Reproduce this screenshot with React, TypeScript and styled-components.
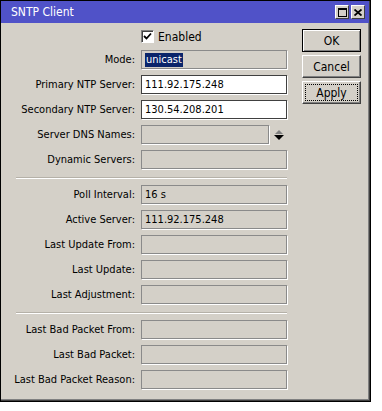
import { Fragment } from "react";
import styled, { createGlobalStyle } from "styled-components";

const GlobalStyle = createGlobalStyle`
  body {
    margin: 0;
    background: #fff;
    font-family: "DejaVu Sans Condensed", "DejaVu Sans", sans-serif;
    font-size: 11px;
  }
`;

const Window = styled.div`
  width: 371px;
  height: 402px;
  box-sizing: border-box;
  border: 1px solid #000;
  background: #d4d0c8;
  box-shadow: inset -1px -1px 0 #404040, inset -2px -2px 0 #808080;
  display: flex;
  flex-direction: column;
`;

const TitleBar = styled.div`
  height: 22px;
  flex: none;
  margin-right: 1px;
  background: #5052c8;
  color: #fff;
  display: flex;
  align-items: center;
  justify-content: space-between;
  padding: 0 4px 0 10px;
  font-size: 12px;
`;

const TitleButtons = styled.div`
  display: flex;
  gap: 2px;
`;

const TitleButton = styled.div`
  width: 14px;
  height: 14px;
  box-sizing: border-box;
  background: #d4d0c8;
  border: 1px solid;
  border-color: #fff #404040 #404040 #fff;
  display: flex;
  align-items: center;
  justify-content: center;
`;

const Body = styled.div`
  display: flex;
  gap: 15px;
  padding: 7px 7px 0 4px;
`;

const Form = styled.div`
  display: flex;
  flex-direction: column;
  width: 282px;
`;

const CheckRow = styled.label`
  display: flex;
  align-items: center;
  gap: 4px;
  height: 13px;
  padding-left: 136px;
  margin-bottom: 7px;
  font-size: 12px;
`;

const CheckBox = styled.span`
  width: 13px;
  height: 13px;
  box-sizing: border-box;
  background: #fff;
  border: 1px solid;
  border-color: #808080 #fff #fff #808080;
  box-shadow: inset 1px 1px 0 #404040;
  display: flex;
  align-items: center;
  justify-content: center;
`;

const Section = styled.div`
  display: grid;
  grid-template-columns: 130px 146px;
  column-gap: 6px;
  row-gap: 6px;
  align-items: center;
`;

const Label = styled.div`
  text-align: right;
  white-space: nowrap;
  color: #000;
`;

const Field = styled.div<{ $editable?: boolean; $width?: number }>`
  width: ${(p) => (p.$width ? `${p.$width}px` : "100%")};
  height: 19px;
  box-sizing: border-box;
  border: 1px solid ${(p) => (p.$editable ? "#404040" : "#8a8a8a")};
  box-shadow: 1px 1px 0 #fff;
  background: ${(p) => (p.$editable ? "#fff" : "#d4d0c8")};
  padding: 0 3px;
  display: flex;
  align-items: center;
  white-space: nowrap;
  overflow: hidden;
`;

const Selected = styled.span`
  background: #0a246a;
  color: #fff;
  padding: 0 1px;
  line-height: 14px;
`;

const FieldGroup = styled.div`
  display: flex;
  align-items: center;
  gap: 5px;
`;

const Separator = styled.div`
  margin: 8px 0 6px 11px;
  width: 271px;
  border-top: 1px solid #b5b1a8;
  border-bottom: 1px solid #fff;
`;

const Buttons = styled.div`
  display: flex;
  flex-direction: column;
  gap: 3px;
  margin-top: -1px;
`;

const Button = styled.button<{ $default?: boolean; $focused?: boolean }>`
  width: 59px;
  height: 23px;
  box-sizing: border-box;
  padding: 0;
  font: inherit;
  font-size: 12px;
  color: #000;
  background: #d4d0c8;
  border: 1px solid;
  border-color: ${(p) => (p.$default ? "#000" : "#fff #404040 #404040 #fff")};
  box-shadow: ${(p) =>
    p.$default
      ? "inset 1px 1px 0 #fff, inset -1px -1px 0 #808080"
      : "inset -1px -1px 0 #808080"};
  outline: ${(p) => (p.$focused ? "1px dotted #000" : "none")};
  outline-offset: -4px;
`;

type Row = { label: string; value?: string; editable?: boolean };

function Rows({ rows }: { rows: Row[] }) {
  return (
    <Section>
      {rows.map((r) => (
        <Fragment key={r.label}>
          <Label>{r.label}</Label>
          <Field $editable={r.editable}>{r.value}</Field>
        </Fragment>
      ))}
    </Section>
  );
}

export default function App() {
  return (
    <>
      <GlobalStyle />
      <Window>
        <TitleBar>
          <span>SNTP Client</span>
          <TitleButtons>
            <TitleButton>
              <svg width="9" height="9" viewBox="0 0 9 9">
                <rect x="0.5" y="0.5" width="8" height="8" fill="none" stroke="#000" />
                <rect x="0" y="0" width="9" height="2" fill="#000" />
              </svg>
            </TitleButton>
            <TitleButton>
              <svg width="8" height="7" viewBox="0 0 8 7">
                <path d="M0.5 0.5 L7.5 6.5 M7.5 0.5 L0.5 6.5" stroke="#000" strokeWidth="1.8" />
              </svg>
            </TitleButton>
          </TitleButtons>
        </TitleBar>
        <Body>
          <Form>
            <CheckRow>
              <CheckBox>
                <svg width="9" height="9" viewBox="0 0 9 9">
                  <path d="M1 4 L3.5 6.5 L8 1.5" fill="none" stroke="#000" strokeWidth="1.8" />
                </svg>
              </CheckBox>
              Enabled
            </CheckRow>
            <Section>
              <Label>Mode:</Label>
              <Field>
                <Selected>unicast</Selected>
              </Field>
              <Label>Primary NTP Server:</Label>
              <Field $editable>111.92.175.248</Field>
              <Label>Secondary NTP Server:</Label>
              <Field $editable>130.54.208.201</Field>
              <Label>Server DNS Names:</Label>
              <FieldGroup>
                <Field $width={128} />
                <svg width="10" height="10" viewBox="0 0 10 10">
                  <path d="M5 0 L9 4 L1 4 Z" fill="#808080" />
                  <path d="M0 5 L10 5 L5 10 Z" fill="#000" />
                </svg>
              </FieldGroup>
              <Label>Dynamic Servers:</Label>
              <Field />
            </Section>
            <Separator />
            <Rows
              rows={[
                { label: "Poll Interval:", value: "16 s" },
                { label: "Active Server:", value: "111.92.175.248" },
                { label: "Last Update From:" },
                { label: "Last Update:" },
                { label: "Last Adjustment:" },
              ]}
            />
            <Separator />
            <Rows
              rows={[
                { label: "Last Bad Packet From:" },
                { label: "Last Bad Packet:" },
                { label: "Last Bad Packet Reason:" },
              ]}
            />
          </Form>
          <Buttons>
            <Button $default>OK</Button>
            <Button>Cancel</Button>
            <Button $focused>Apply</Button>
          </Buttons>
        </Body>
      </Window>
    </>
  );
}
